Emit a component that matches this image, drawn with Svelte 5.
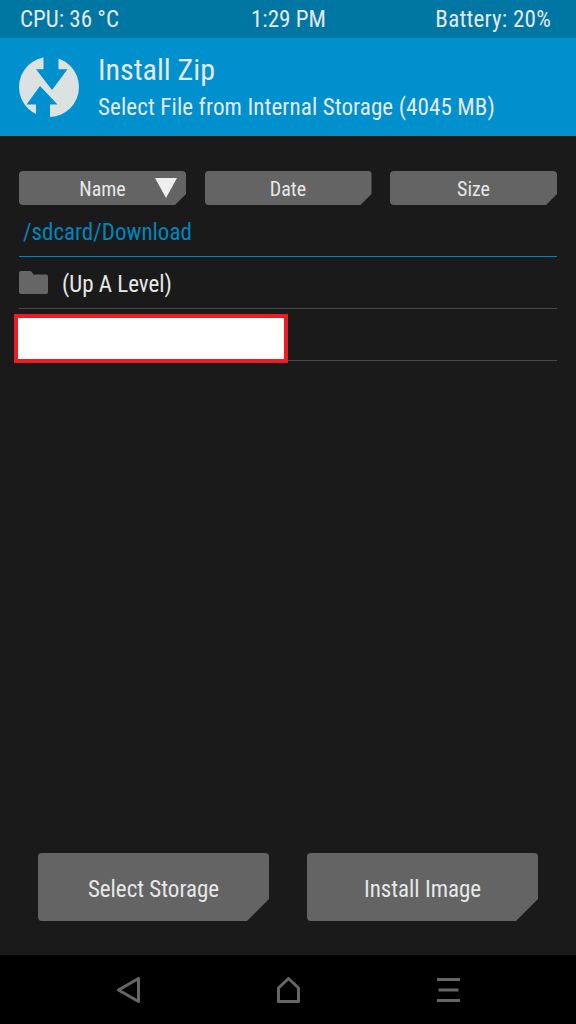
<script lang="ts">
  const sortButtons = [
    { label: 'Name', active: true },
    { label: 'Date', active: false },
    { label: 'Size', active: false },
  ]
  const actions = ['Select Storage', 'Install Image']
</script>

<div class="screen">
  <div class="status">
    <span>CPU: 36 °C</span>
    <span>1:29 PM</span>
    <span class="battery">Battery: 20%</span>
  </div>

  <header class="header">
    <svg class="logo" viewBox="0 0 60 60" aria-hidden="true">
      <circle cx="30" cy="30" r="30" fill="#dce1e2" />
      <path fill="#0090cd" d="M24.500 -2V12.200H17L33 33L48.500 12.200H39.500V-2Z" />
      <path fill="#0090cd" d="M17 62V47.500H7.500L21 29L38.500 47.500H31V62Z" />
    </svg>
    <div class="titles">
      <div class="title">Install Zip</div>
      <div class="subtitle">Select File from Internal Storage (4045 MB)</div>
    </div>
  </header>

  <main class="body">
    <div class="sort">
      {#each sortButtons as b}
        <button class="btn small">
          <span>{b.label}</span>
          {#if b.active}<i class="arrow"></i>{/if}
        </button>
      {/each}
    </div>

    <div class="path">/sdcard/Download</div>

    <div class="row">
      <svg class="folder" viewBox="0 0 29 23" aria-hidden="true">
        <path fill="#666" d="M2 0H11L12.500 0.500L14.500 3.500H27A2 2 0 0 1 29 5.500V21A2 2 0 0 1 27 23H2A2 2 0 0 1 0 21V2A2 2 0 0 1 2 0Z" />
      </svg>
      <span class="name">(Up A Level)</span>
    </div>
    <div class="row">
      <div class="redact"></div>
    </div>

    <div class="actions">
      {#each actions as a}
        <button class="btn large"><span>{a}</span></button>
      {/each}
    </div>
  </main>

  <nav class="nav">
    <svg viewBox="0 0 23 26" aria-hidden="true">
      <path d="M21.500 1.500V24.500L1.500 13Z" />
    </svg>
    <svg viewBox="0 0 23 26" aria-hidden="true">
      <path d="M1.500 11L11.500 1.500L21.500 11V24.500H1.500Z" />
    </svg>
    <svg viewBox="0 0 23 26" aria-hidden="true">
      <path d="M0 2.500H23M1.500 13H21.500M0 23.500H23" />
    </svg>
  </nav>
</div>

<style>
  :global(body) {
    margin: 0;
    background: #1a1a1a;
  }

  .screen {
    width: 576px;
    height: 1024px;
    display: flex;
    flex-direction: column;
    overflow: hidden;
    font-family: Roboto, 'Liberation Sans', sans-serif;
    font-stretch: condensed;
    color: #e6e8e8;
  }

  .status {
    height: 38px;
    flex: none;
    display: grid;
    grid-template-columns: 231px auto 1fr;
    align-items: center;
    padding: 0 25px 0 20px;
    background: #0077a3;
    font-size: 23px;
  }

  .battery {
    text-align: right;
    letter-spacing: 0.25px;
  }

  .header {
    height: 98px;
    flex: none;
    display: flex;
    align-items: center;
    gap: 19px;
    padding-left: 19px;
    background: #0090cd;
  }

  .logo {
    width: 60px;
    height: 60px;
    flex: none;
  }

  .title {
    font-size: 30px;
    line-height: 36px;
  }

  .subtitle {
    font-size: 23px;
    letter-spacing: 0.12px;
    line-height: 30px;
    margin-top: 5px;
  }

  .body {
    flex: 1;
    display: flex;
    flex-direction: column;
    padding: 35px 19px 0;
    background: #1a1a1a;
  }

  .sort {
    display: grid;
    grid-template-columns: repeat(3, 167px);
    justify-content: space-between;
  }

  .btn {
    border: 0;
    padding: 0;
    background: #646464;
    color: inherit;
    font: inherit;
    font-stretch: condensed;
    border-radius: 4px;
  }

  .btn span {
    position: relative;
  }

  .btn.small {
    position: relative;
    height: 34px;
    font-size: 20px;
    clip-path: polygon(0 0, 100% 0, 100% 23px, calc(100% - 11px) 100%, 0 100%);
  }

  .btn.small span {
    top: 1px;
  }

  .arrow {
    position: absolute;
    right: 9px;
    top: 7px;
    border-style: solid;
    border-width: 20px 11px 0;
    border-color: #eee transparent transparent;
  }

  .path {
    height: 51px;
    padding-left: 4px;
    line-height: 56px;
    font-size: 23px;
    color: #0086bd;
    border-bottom: 1px solid #0086bd;
  }

  .row {
    position: relative;
    height: 51px;
    display: flex;
    align-items: center;
    gap: 14px;
    font-size: 23px;
    border-bottom: 1px solid #4a4a4a;
  }

  .name {
    position: relative;
    top: 2px;
  }

  .folder {
    width: 29px;
    height: 23px;
    flex: none;
  }

  .redact {
    position: absolute;
    left: -5px;
    top: 5px;
    width: 266px;
    height: 41px;
    background: #fff;
    border: 4px solid #ed1c24;
  }

  .actions {
    margin-top: auto;
    margin-bottom: 34px;
    padding: 0 19px;
    display: grid;
    grid-template-columns: repeat(2, 231px);
    justify-content: space-between;
  }

  .btn.large {
    height: 68px;
    font-size: 23px;
    clip-path: polygon(0 0, 100% 0, 100% 46px, calc(100% - 22px) 100%, 0 100%);
  }

  .btn.large span {
    top: 2px;
  }

  .nav {
    height: 69px;
    flex: none;
    display: flex;
    justify-content: center;
    gap: 137px;
    align-items: center;
    background: #000;
  }

  .nav svg {
    width: 23px;
    height: 26px;
    fill: none;
    stroke: #666;
    stroke-width: 3;
    stroke-linejoin: round;
  }
</style>
